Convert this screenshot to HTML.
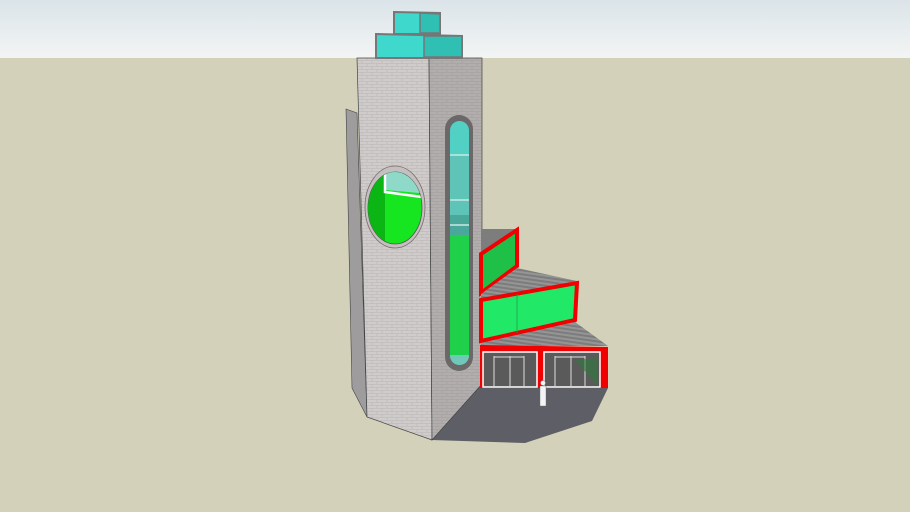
<!DOCTYPE html>
<html><head><meta charset="utf-8"><style>
html,body{margin:0;padding:0;width:910px;height:512px;overflow:hidden}
svg{display:block}
</style></head><body>
<svg width="910" height="512" viewBox="0 0 910 512" xmlns="http://www.w3.org/2000/svg">
<defs>
<linearGradient id="sky" x1="0" y1="0" x2="0" y2="1">
<stop offset="0" stop-color="#dbe4e9"/><stop offset="1" stop-color="#f3f5f4"/>
</linearGradient>
<pattern id="brick" width="10" height="6" patternUnits="userSpaceOnUse">
<rect width="10" height="6" fill="#cfcccb"/>
<path d="M0 0.5H10M0 3.5H10M2 0.5V3.5M7 3.5V6" stroke="#b9b5b4" stroke-width="0.6" fill="none"/>
</pattern>
<pattern id="brick2" width="10" height="6" patternUnits="userSpaceOnUse">
<rect width="10" height="6" fill="#b2aeae"/>
<path d="M0 0.5H10M0 3.5H10M2 0.5V3.5M7 3.5V6" stroke="#a19d9d" stroke-width="0.6" fill="none"/>
</pattern>
<pattern id="roof" width="8" height="4" patternUnits="userSpaceOnUse" patternTransform="rotate(8)">
<rect width="8" height="4" fill="#7c7c7c"/><rect width="8" height="2" fill="#959595"/>
</pattern>
</defs>
<rect width="910" height="59" fill="url(#sky)"/>
<rect y="58" width="910" height="454" fill="#d3d1b9"/>
<polygon points="432,440 525,443 592,421 608,388 480,386 440,400" fill="#5e5e66"/>
<polygon points="346,109 357,113 367,417 352,388" fill="#9e9c9c" stroke="#444" stroke-width="0.6"/>
<polygon points="357,58 429,58 432,440 367,417" fill="url(#brick)" stroke="#444" stroke-width="0.7"/>
<polygon points="429,58 482,58 482,384 432,440" fill="url(#brick2)" stroke="#444" stroke-width="0.7"/>
<ellipse cx="395" cy="207" rx="30" ry="41" fill="#c4c0bf" stroke="#7a6a6a" stroke-width="0.8"/>
<ellipse cx="395" cy="208" rx="27" ry="36" fill="#16e620" stroke="#555" stroke-width="0.8"/>
<clipPath id="cc"><ellipse cx="395" cy="208" rx="27" ry="36"/></clipPath>
<g clip-path="url(#cc)">
<rect x="366" y="170" width="19" height="80" fill="#0bb614"/>
<polygon points="386,170 430,170 430,194 386,190" fill="#8fd9c8"/>
<path d="M385 170V192L422 197" stroke="#fff" stroke-width="2.5" fill="none"/>
</g>
<rect x="445" y="115" width="28" height="256" rx="14" fill="#6a6868"/>
<rect x="450" y="121" width="19" height="244" rx="9.5" fill="#52d0c4"/>
<clipPath id="oc"><rect x="450" y="121" width="19" height="244" rx="9.5"/></clipPath>
<g clip-path="url(#oc)">
<rect x="450" y="155" width="19" height="60" fill="#5ec4b8"/>
<rect x="450" y="215" width="19" height="30" fill="#4aa89a"/>
<rect x="450" y="235" width="19" height="125" fill="#1ed04a"/>
<rect x="450" y="355" width="19" height="15" fill="#6fc8b8"/>
<path d="M450 155H469M450 200H469M450 225H469" stroke="#c8e8e4" stroke-width="1.5"/>
</g>
<polygon points="376,34 462,36 462,58 376,58" fill="#3fd8cc" stroke="#777" stroke-width="2"/>
<polygon points="424,36 462,36 462,57 424,57" fill="#30bfb3" stroke="#777" stroke-width="1.5"/>
<polygon points="394,12 440,13 440,34 394,34" fill="#3fd8cc" stroke="#777" stroke-width="2"/>
<polygon points="420,13 440,14 440,33 420,33" fill="#30bfb3" stroke="#777" stroke-width="1.5"/>
<polygon points="481,229 517,229 481,254" fill="#7d7d7d"/>
<polygon points="481,254 517,230 517,266 481,293" fill="#1fc048" stroke="#f00000" stroke-width="4"/>
<polygon points="481,294 517,268 577,281 481,299" fill="url(#roof)"/>
<polygon points="481,300 577,283 575,320 481,341" fill="#22e868" stroke="#f00000" stroke-width="4"/>
<line x1="517" y1="294" x2="517" y2="333" stroke="#1aa048" stroke-width="0.8"/>
<polygon points="481,343 575,322 608,346 481,346" fill="url(#roof)"/>
<polygon points="480,345 608,347 608,388 480,388" fill="#f00000"/>
<rect x="483" y="352" width="54" height="35" fill="#5a5a5a" stroke="#fff" stroke-width="1.5"/>
<rect x="544" y="352" width="56" height="35" fill="#5a5a5a" stroke="#fff" stroke-width="1.5"/>
<path d="M494 356V387M510 356V387M524 356V387M494 357H524M555 356V387M571 356V387M585 356V387M555 357H585" stroke="#ddd" stroke-width="1"/>
<polygon points="575,360 597,358 597,385" fill="#2d7a3c" opacity="0.6"/>
<rect x="540" y="386" width="6" height="20" fill="#f4f4f4" stroke="#666" stroke-width="0.4"/>
<circle cx="543" cy="383" r="2.5" fill="#f4f4f4" stroke="#666" stroke-width="0.4"/>
</svg>
</body></html>
